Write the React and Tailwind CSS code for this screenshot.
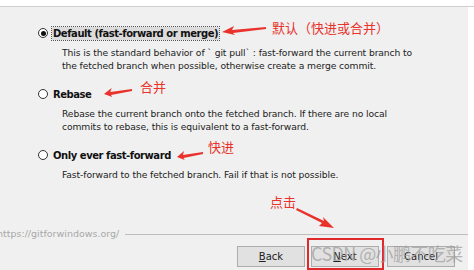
import React from 'react';

const options = [
    {
        label: 'Default (fast-forward or merge)',
        checked: true,
        lines: [
            'This is the standard behavior of ` git pull` : fast-forward the current branch to',
            'the fetched branch when possible, otherwise create a merge commit.',
        ],
    },
    {
        label: 'Rebase',
        lines: [
            'Rebase the current branch onto the fetched branch. If there are no local',
            'commits to rebase, this is equivalent to a fast-forward.',
        ],
    },
    {
        label: 'Only ever fast-forward',
        lines: ['Fast-forward to the fetched branch. Fail if that is not possible.'],
    },
];

const Radio = ({ checked }) => (
    <span className="w-[10px] h-[10px] rounded-full border border-[#333] bg-white flex items-center justify-center shrink-0">
        {checked && <span className="w-[5px] h-[5px] rounded-full bg-[#111]" />}
    </span>
);

// hand drawn looking red arrow, pointing left
const ArrowLeft = ({ w = 44 }) => (
    <svg width={w} height="10" viewBox="0 0 44 10" preserveAspectRatio="none">
        <path d="M0 7 L12 1 L10 5 L44 2 L44 4 L11 8 L13 10 Z" fill="#e8322b" />
    </svg>
);

const Option = ({ opt }) => (
    <div className="flex flex-col">
        <div className="flex items-center gap-[4px] h-[14px]">
            <Radio checked={opt.checked} />
            <span
                className={`text-[10px] font-bold text-[#111] leading-[13px] px-[1px] tracking-[-0.45px] ${
                    opt.checked ? 'bg-[#dcdcdc] outline outline-1 outline-dotted outline-[#555]' : ''
                }`}
            >
                {opt.label}
            </span>
        </div>
        <div className="pl-[24px] pt-[6px] text-[9.2px] leading-[13px] text-[#222] tracking-[-0.1px]">
            {opt.lines.map((l) => (
                <div key={l} className="whitespace-pre">{l}</div>
            ))}
        </div>
    </div>
);

const Btn = ({ children, className = '' }) => (
    <div
        className={`w-[68px] h-[21px] border border-[#adadad] bg-[#e1e1e1] flex items-center justify-center text-[10px] text-[#222] ${className}`}
    >
        {children}
    </div>
);

export default function App() {
    return (
        <div className="relative w-[474px] h-[270px] bg-white overflow-hidden font-['DejaVu_Sans',sans-serif]">
            <div className="h-[7px] bg-white border-b border-[#cfcfcf]" />
            <div className="flex h-[263px]">
                <div className="flex-1 bg-[#f0f0f0] flex flex-col">
                    <div className="pl-[38px] pt-[19px] flex flex-col">
                        <Option opt={options[0]} />
                        <div className="h-[15px]" />
                        <Option opt={options[1]} />
                        <div className="h-[15px]" />
                        <Option opt={options[2]} />
                    </div>
                    <div className="mt-auto flex items-center h-[12px] mb-[6px]">
                        <span className="text-[9.5px] text-[#a8a8a8] ml-[-3px] whitespace-nowrap">https://gitforwindows.org/</span>
                        <div className="flex-1 border-t border-[#bdbdbd] ml-[6px]" />
                    </div>
                    <div className="flex items-start gap-[6px] pl-[237px] h-[24px]">
                        <Btn><span><u>B</u>ack</span></Btn>
                        <Btn className="border-[#0078d7]"><span><u>N</u>ext</span></Btn>
                        <Btn className="ml-[2px]"><span>Cancel</span></Btn>
                    </div>
                </div>
                <div className="w-[6px] bg-white" />
            </div>

            {/* annotations */}
            <div className="absolute left-[222px] top-[25px]"><ArrowLeft /></div>
            <div className="absolute left-[272px] top-[18px] text-[13px] text-[#e8322b] font-['Noto_Sans_CJK_SC',sans-serif]">默认（快进或合并）</div>
            <div className="absolute left-[104px] top-[87px]"><ArrowLeft w={28} /></div>
            <div className="absolute left-[140px] top-[77px] text-[13px] text-[#e8322b] font-['Noto_Sans_CJK_SC',sans-serif]">合并</div>
            <div className="absolute left-[177px] top-[150px]"><ArrowLeft w={26} /></div>
            <div className="absolute left-[208px] top-[137px] text-[13px] text-[#e8322b] font-['Noto_Sans_CJK_SC',sans-serif]">快进</div>
            <div className="absolute left-[270px] top-[192px] text-[13px] text-[#e8322b] font-['Noto_Sans_CJK_SC',sans-serif]">点击</div>
            <svg className="absolute left-[296px] top-[208px]" width="40" height="22" viewBox="0 0 40 22">
                <path d="M0 2 L1 0 L28 13 L27 9 L38 20 L23 18 L26 15 Z" fill="#e8322b" />
            </svg>
            <div className="absolute left-[307px] top-[238px] w-[77px] h-[32px] border-2 border-[#e0292b]" />
            <div className="absolute left-[311px] top-[240px] text-[18px] text-[#9a9a9a]/70 font-['Noto_Sans_CJK_SC',sans-serif] whitespace-nowrap tracking-[-0.6px]">CSDN @小鹏不吃菜</div>
        </div>
    );
}
